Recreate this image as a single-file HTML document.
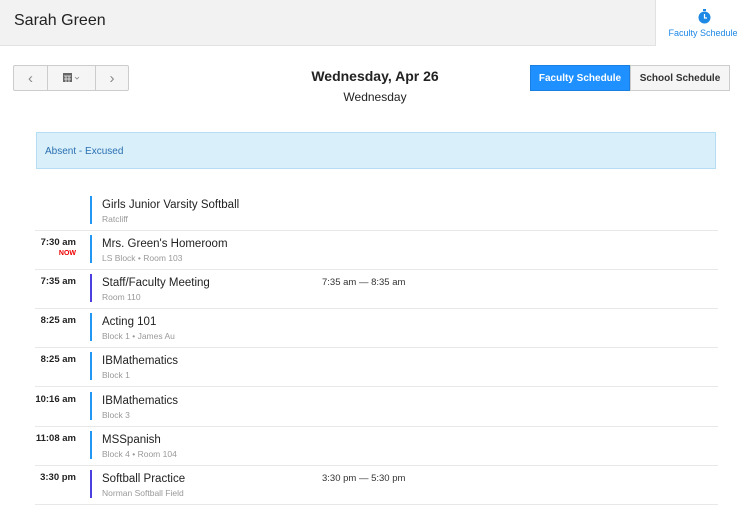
<!DOCTYPE html>
<html><head><style>
*{box-sizing:border-box;margin:0;padding:0}
body{width:750px;height:532px;background:#fff;font-family:"Liberation Sans",sans-serif;position:relative;overflow:hidden;color:#222}
.hdr{position:absolute;left:0;top:0;width:656px;height:46px;background:#f2f2f2;border-bottom:1px solid #e2e2e2;border-right:1px solid #e2e2e2}
.hdr span{position:absolute;left:14px;top:12px;font-size:16px;color:#222}
.nav{position:absolute;left:13px;top:65px;width:116px;height:26px;border:1px solid #ccc;border-radius:2px;background:#f5f5f5;display:flex}
.nav div{border-right:1px solid #ccc;height:100%;display:flex;align-items:center;justify-content:center;color:#888;font-size:15px}
.title{position:absolute;left:0;width:750px;text-align:center}
.seg{position:absolute;left:530px;top:65px;height:26px;display:flex;font-size:10px;font-weight:bold}
.seg div{display:flex;align-items:center;justify-content:center}
.alert{position:absolute;left:36px;top:132px;width:680px;height:37px;background:#d9f0fb;border:1px solid #b6def3;font-size:10px;color:#2a6fb0;padding:13px 8px}
.row{position:absolute;left:35px;width:683px;height:39px;border-bottom:1px solid #e8e8e8}
.row .t{position:absolute;right:642px;top:6px;font-size:9.5px;font-weight:bold;white-space:nowrap}
.row .now{position:absolute;right:642px;top:19px;font-size:7px;font-weight:bold;color:#e00}
.row .bar{position:absolute;left:55px;top:4px;width:2px;height:28px;background:#2196f3}
.row .bar.p{background:#4c3fe0}
.row .n{position:absolute;left:67px;top:7px;font-size:11.5px;color:#222}
.row .s{position:absolute;left:67px;top:22px;font-size:8.5px;color:#999}
.row .r{position:absolute;left:287px;top:7px;font-size:9.5px;color:#333}
</style></head><body>
<div class="hdr"><span>Sarah Green</span></div>
<svg style="position:absolute;left:698px;top:9px" width="13" height="15" viewBox="0 0 13 15"><rect x="5" y="0" width="3" height="2" fill="#1e88e5"/><circle cx="6.5" cy="8.5" r="6" fill="#1e88e5"/><path d="M6.5 5v4h2.5" stroke="#fff" stroke-width="1.2" fill="none"/></svg>
<div style="position:absolute;left:656px;top:28px;width:94px;text-align:center;font-size:9px;color:#1e88e5">Faculty Schedule</div>
<div class="nav"><div style="width:34px">&#8249;</div><div style="width:48px"><svg width="18" height="10" viewBox="0 0 18 10"><rect x="0" y="0" width="9" height="9" fill="#666"/><path d="M1 3h7M3 3v6M6 3v6M1 6h7" stroke="#f5f5f5" stroke-width="0.8"/><path d="M12 4l2 2 2-2" stroke="#888" fill="none" stroke-width="0.8"/></svg></div><div style="width:32px;border:none">&#8250;</div></div>
<div class="title" style="top:68px;font-size:14px;font-weight:bold">Wednesday, Apr 26</div>
<div class="title" style="top:90px;font-size:12px">Wednesday</div>
<div class="seg"><div style="width:100px;background:#1e90ff;color:#fff;border:1px solid #1a7fe0">Faculty Schedule</div><div style="width:100px;background:#f5f5f5;color:#333;border:1px solid #ccc">School Schedule</div></div>
<div class="alert">Absent - Excused</div>

<div class="row" style="top:192px"><div class="bar"></div><div class="n">Girls Junior Varsity Softball</div><div class="s">Ratcliff</div></div>
<div class="row" style="top:231px"><div class="t">7:30 am</div><div class="now">NOW</div><div class="bar"></div><div class="n">Mrs. Green's Homeroom</div><div class="s">LS Block • Room 103</div></div>
<div class="row" style="top:270px"><div class="t">7:35 am</div><div class="bar p"></div><div class="n">Staff/Faculty Meeting</div><div class="s">Room 110</div><div class="r">7:35 am — 8:35 am</div></div>
<div class="row" style="top:309px"><div class="t">8:25 am</div><div class="bar"></div><div class="n">Acting 101</div><div class="s">Block 1 • James Au</div></div>
<div class="row" style="top:348px"><div class="t">8:25 am</div><div class="bar"></div><div class="n">IBMathematics</div><div class="s">Block 1</div></div>
<div class="row" style="top:388px"><div class="t">10:16 am</div><div class="bar"></div><div class="n">IBMathematics</div><div class="s">Block 3</div></div>
<div class="row" style="top:427px"><div class="t">11:08 am</div><div class="bar"></div><div class="n">MSSpanish</div><div class="s">Block 4 • Room 104</div></div>
<div class="row" style="top:466px"><div class="t">3:30 pm</div><div class="bar p"></div><div class="n">Softball Practice</div><div class="s">Norman Softball Field</div><div class="r">3:30 pm — 5:30 pm</div></div>
</body></html>
